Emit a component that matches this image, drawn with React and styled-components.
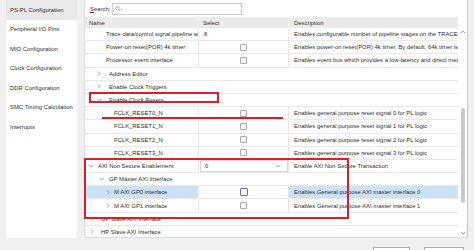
import React from 'react';
import styled, { createGlobalStyle } from 'styled-components';

const GlobalStyle = createGlobalStyle`
  html, body { margin: 0; padding: 0; background: #f0f0f0; }
  body { font-family: "Liberation Sans", Arial, sans-serif; }
  * { box-sizing: border-box; }
`;

const Shell = styled.div`
  position: relative;
  display: flex;
  width: 474px;
  height: 250px;
  overflow: hidden;
  background: #f0f0f0;
  font-size: 5.9px;
  color: #2e2e2e;
`;

const Sidebar = styled.div`
  display: flex;
  flex-direction: column;
  width: 71px;
  height: 238px;
  margin-left: 6px;
  background: #fff;
`;

const NavItem = styled.div`
  display: flex;
  align-items: center;
  height: 19.5px;
  padding-left: 4px;
  white-space: nowrap;
  background: ${p => (p.$active ? '#e9e9e9' : 'transparent')};
`;

const Main = styled.div`
  display: flex;
  flex-direction: column;
  width: 384px;
  margin-left: 7px;
`;

const Panel = styled.div`
  display: flex;
  flex-direction: column;
  flex-shrink: 0;
  height: 238px;
  background: #fff;
  border-left: 1px solid #dcdcdc;
  border-right: 1px solid #c4c4c4;
  border-bottom: 1px solid #dcdcdc;
  overflow: hidden;
`;

const SearchRow = styled.div`
  display: flex;
  align-items: center;
  flex-shrink: 0;
  height: 17px;
  padding-left: 5px;
`;

const SearchLabel = styled.label`
  margin-right: 2px;
  span { text-decoration: underline; }
`;

const SearchBox = styled.div`
  display: flex;
  align-items: center;
  width: 130px;
  height: 12px;
  padding-left: 2px;
  border: 1px solid #cdcdcd;
  background: #fff;
`;

const TableArea = styled.div`
  display: flex;
  flex: 1;
  min-height: 0;
`;

const Table = styled.div`
  width: 373px;
  display: flex;
  flex-direction: column;
`;

const cols = '114px 90px 169px';

const HeaderRow = styled.div`
  display: grid;
  grid-template-columns: ${cols};
  height: 11px;
  background: #ebebeb;
  flex-shrink: 0;
`;

const HeaderCell = styled.div`
  display: flex;
  align-items: center;
  padding-left: ${p => p.$pad || 4}px;
  border-right: ${p => (p.$last ? 'none' : '1px solid #f8f8f8')};
`;

const Row = styled.div`
  display: grid;
  grid-template-columns: ${p => (p.$group ? '1fr' : cols)};
  height: 13.2px;
  flex-shrink: 0;
  border-bottom: 1px solid #e9e9e9;
`;

const NameCell = styled.div`
  display: flex;
  align-items: center;
  padding-left: ${p => p.$pad}px;
  overflow: hidden;
  white-space: nowrap;
  background: ${p => (p.$selected ? '#cde1f7' : 'transparent')};
  border-right: ${p => (p.$group ? 'none' : '1px solid #e6e6e6')};
`;

const SelectCell = styled.div`
  display: flex;
  align-items: center;
  justify-content: ${p => (p.$center ? 'center' : 'flex-start')};
  padding-left: ${p => (p.$center ? 0 : 5)}px;
  border-right: 1px solid #e6e6e6;
  overflow: hidden;
  color: #2e2e2e;
`;

const DescCell = styled.div`
  display: flex;
  align-items: center;
  padding-left: 5px;
  overflow: hidden;
  white-space: nowrap;
  background: ${p => (p.$selected ? '#cde1f7' : 'transparent')};
`;

const Check = styled.span`
  display: block;
  width: ${p => (p.$focus ? 8 : 7)}px;
  height: ${p => (p.$focus ? 8 : 7)}px;
  border: ${p => (p.$focus ? '1.3px solid #5f7391' : '1px solid #a8a8a8')};
  border-radius: 1px;
  background: #fff;
`;

const Dropdown = styled.div`
  display: flex;
  align-items: center;
  justify-content: space-between;
  width: 89px;
  height: 12px;
  margin-left: -4px;
  padding: 0 6px 0 4px;
  border: 1px solid #d4d4d4;
  background: #fff;
`;

const ArrowBox = styled.span`
  display: flex;
  align-items: center;
  flex-shrink: 0;
  width: ${p => p.$w}px;
`;

const Scroll = styled.div`
  display: flex;
  flex-direction: column;
  align-items: center;
  width: 10px;
  padding: 13px 0 2px;
`;

const Track = styled.div`
  flex: 1;
  padding-top: 74px;
`;

const Thumb = styled.div`
  width: 4px;
  height: 95px;
  border-radius: 2px;
  background: #c9c9c9;
`;

const Footer = styled.div`
  display: flex;
  justify-content: flex-end;
  gap: 14px;
  padding: 9px 4px 0 0;
`;

const Button = styled.div`
  flex-shrink: 0;
  width: ${p => p.$w}px;
  height: 18px;
  border: 1px solid #adadad;
  background: #fdfdfd;
`;

const Mark = styled.div`
  position: absolute;
  left: ${p => p.$x}px;
  top: ${p => p.$y}px;
  width: ${p => p.$w}px;
  height: ${p => p.$h}px;
  border: ${p => (p.$line ? 'none' : '2px solid #dc1f26')};
  background: ${p => (p.$line ? '#dc1f26' : 'transparent')};
  pointer-events: none;
`;

const Chevron = ({ dir }) =>
  dir === 'down' ? (
    <svg width="5" height="4" viewBox="0 0 5 4">
      <polyline points="0.5,1 2.5,3 4.5,1" fill="none" stroke="#8c8c8c" strokeWidth="0.8" />
    </svg>
  ) : (
    <svg width="4" height="5" viewBox="0 0 4 5">
      <polyline points="1,0.5 3,2.5 1,4.5" fill="none" stroke="#8c8c8c" strokeWidth="0.8" />
    </svg>
  );

const nav = [
  'PS-PL Configuration',
  'Peripheral I/O Pins',
  'MIO Configuration',
  'Clock Configuration',
  'DDR Configuration',
  'SMC Timing Calculation',
  'Interrupts',
];

const rows = [
  { name: 'Trace data/control signal pipeline width', x: 21, sel: 'value', value: '8', desc: 'Enables configurable number of pipeline stages on the TRACE data and control signals' },
  { name: 'Power-on reset(POR) 4k timer', x: 21, sel: 'check', desc: 'Enables power-on reset(POR) 4k timer. By default, 64k timer is enabled' },
  { name: 'Processor event interface', x: 21, sel: 'check', desc: 'Enables event bus which provides a low-latency and direct mechanism' },
  { name: 'Address Editor', ax: 12, x: 24, arrow: 'right', group: true },
  { name: 'Enable Clock Triggers', ax: 12, x: 24, arrow: 'right', group: true },
  { name: 'Enable Clock Resets', ax: 12, x: 24, arrow: 'down', group: true },
  { name: 'FCLK_RESET0_N', x: 29, sel: 'check', desc: 'Enables general purpose reset signal 0 for PL logic' },
  { name: 'FCLK_RESET1_N', x: 29, sel: 'check', desc: 'Enables general purpose reset signal 1 for PL logic' },
  { name: 'FCLK_RESET2_N', x: 29, sel: 'check', desc: 'Enables general purpose reset signal 2 for PL logic' },
  { name: 'FCLK_RESET3_N', x: 29, sel: 'check', desc: 'Enables general purpose reset signal 3 for PL logic' },
  { name: 'AXI Non Secure Enablement', ax: 4, x: 13, arrow: 'down', sel: 'dropdown', value: '0', desc: 'Enable AXI Non Secure Transaction' },
  { name: 'GP Master AXI Interface', ax: 14, x: 24, arrow: 'down', group: true },
  { name: 'M AXI GP0 interface', ax: 21, x: 29, arrow: 'right', sel: 'check', focus: true, selected: true, desc: 'Enables General purpose AXI master interface 0' },
  { name: 'M AXI GP1 interface', ax: 21, x: 29, arrow: 'right', sel: 'check', desc: 'Enables General purpose AXI master interface 1' },
  { name: 'GP Slave AXI Interface', ax: 5, x: 16, arrow: 'right', group: true },
  { name: 'HP Slave AXI Interface', ax: 5, x: 16, arrow: 'right', group: true },
];

const SelectContent = ({ row }) => {
  if (row.sel === 'check') {
    return (
      <SelectCell $center>
        <Check $focus={row.focus} />
      </SelectCell>
    );
  }
  if (row.sel === 'dropdown') {
    return (
      <SelectCell>
        <Dropdown>
          <span>{row.value}</span>
          <Chevron dir="down" />
        </Dropdown>
      </SelectCell>
    );
  }
  return <SelectCell>{row.value}</SelectCell>;
};

const TreeRow = ({ row }) => (
  <Row $group={row.group}>
    <NameCell $pad={row.arrow ? row.ax : row.x} $group={row.group} $selected={row.selected}>
      {row.arrow && (
        <ArrowBox $w={row.x - row.ax}>
          <Chevron dir={row.arrow} />
        </ArrowBox>
      )}
      {row.name}
    </NameCell>
    {!row.group && <SelectContent row={row} />}
    {!row.group && <DescCell $selected={row.selected}>{row.desc}</DescCell>}
  </Row>
);

const App = () => (
  <>
    <GlobalStyle />
    <Shell>
      <Sidebar>
        {nav.map((n, i) => (
          <NavItem key={n} $active={i === 0}>{n}</NavItem>
        ))}
      </Sidebar>

      <Main>
        <Panel>
          <SearchRow>
            <SearchLabel><span>S</span>earch:</SearchLabel>
            <SearchBox>
              <svg width="8" height="6" viewBox="0 0 8 6">
                <circle cx="2.4" cy="2.4" r="1.7" fill="none" stroke="#8a8a8a" strokeWidth="0.7" />
                <line x1="3.6" y1="3.6" x2="4.8" y2="4.8" stroke="#8a8a8a" strokeWidth="0.7" />
                <line x1="5.5" y1="3.4" x2="7.2" y2="3.4" stroke="#8a8a8a" strokeWidth="0.7" />
              </svg>
            </SearchBox>
          </SearchRow>

          <TableArea>
            <Table>
              <HeaderRow>
                <HeaderCell>Name</HeaderCell>
                <HeaderCell>Select</HeaderCell>
                <HeaderCell $pad={5} $last>Description</HeaderCell>
              </HeaderRow>
              {rows.map(r => (
                <TreeRow key={r.name} row={r} />
              ))}
            </Table>
            <Scroll>
              <svg width="6" height="4" viewBox="0 0 6 4">
                <polyline points="0.8,3.2 3,1 5.2,3.2" fill="none" stroke="#8c8c8c" strokeWidth="0.8" />
              </svg>
              <Track>
                <Thumb />
              </Track>
              <svg width="6" height="4" viewBox="0 0 6 4">
                <polyline points="0.8,0.8 3,3 5.2,0.8" fill="none" stroke="#8c8c8c" strokeWidth="0.8" />
              </svg>
            </Scroll>
          </TableArea>
        </Panel>
        <Footer>
          <Button $w={37} />
          <Button $w={40} />
        </Footer>
      </Main>

      <Mark $x={89} $y={92} $w={130} $h={11} />
      <Mark $line $x={102} $y={117} $w={181} $h={2} />
      <Mark $x={84} $y={158} $w={265} $h={61} />
    </Shell>
  </>
);

export default App;
